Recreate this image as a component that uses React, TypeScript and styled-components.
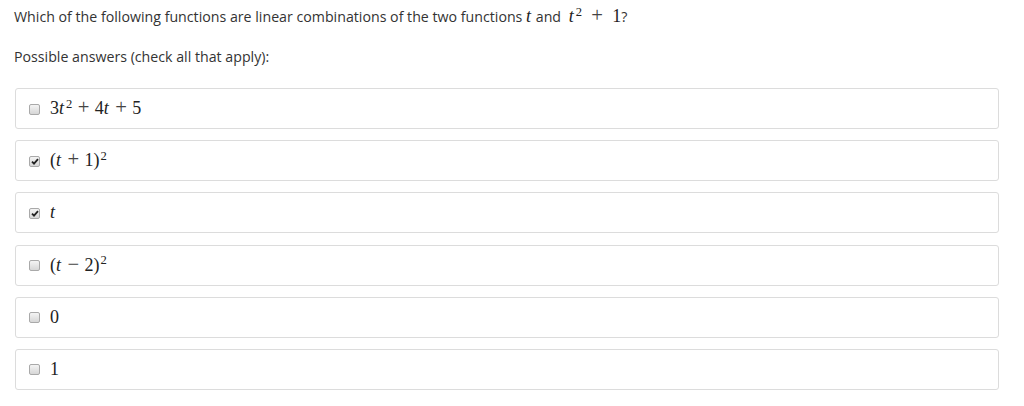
import React from 'react';
import styled, { createGlobalStyle } from 'styled-components';

const GlobalStyle = createGlobalStyle`
  html, body {
    margin: 0;
    padding: 0;
    background: #fff;
    overflow: hidden;
  }
  body {
    font-family: 'Open Sans', 'Liberation Sans', sans-serif;
    color: #333;
  }
`;

const Page = styled.div`
  padding: 6px 25px 0 15px;
  height: 406px;
  box-sizing: border-box;
  overflow: hidden;
`;

const Question = styled.p`
  margin: 0 0 0 -1px;
  font-size: 14.2px;
  line-height: 20px;
  height: 20px;
`;

const Hint = styled.p`
  margin: 21px 0 0 -1px;
  font-size: 14.2px;
  line-height: 20px;
`;

const Options = styled.ul`
  list-style: none;
  margin: 21px 0 0;
  padding: 0;
  display: flex;
  flex-direction: column;
  gap: 11.2px;
`;

const Option = styled.li`
  height: 41px;
  box-sizing: border-box;
  border: 1px solid #dcdcdc;
  border-radius: 3px;
  display: flex;
  align-items: center;
  padding-left: 13px;
  gap: 10px;
`;

const Box = styled.span`
  width: 11px;
  height: 11px;
  box-sizing: border-box;
  border: 1px solid #a9a9a9;
  border-radius: 2px;
  background: linear-gradient(#f4f4f4, #d6d6d6);
  display: flex;
  align-items: center;
  justify-content: center;
  flex: none;
  margin-top: 1px;
`;

const Math = styled.span<{ $size?: number; $gap?: number }>`
  font-family: 'Liberation Serif', 'DejaVu Serif', serif;
  font-size: ${(p) => p.$size ?? 18}px;
  margin-left: ${(p) => p.$gap ?? 0}px;
  color: #222;
  white-space: nowrap;
`;

const Mi = styled.i`
  font-style: italic;
  padding-right: 1px;
`;

const Mo = styled.span<{ $wide?: boolean }>`
  font-size: 1.15em;
  line-height: 0;
  margin: 0 ${(p) => (p.$wide ? 0.45 : 0.26)}em;
  color: #444;
`;

const Sup = styled.sup`
  font-size: 0.7em;
  vertical-align: 0.5em;
  line-height: 0;
  margin-left: 1px;
`;

const Feedback = styled.div`
  margin: 14px 0 0 15px;
  color: #c9302c;
  font-size: 14px;
  line-height: 20px;
`;

function Check({ checked }: { checked?: boolean }) {
  return (
    <Box>
      {checked && (
        <svg width="8" height="7" viewBox="0 0 8 7">
          <path d="M1 3.6 L3 5.6 L7 1.2" fill="none" stroke="#222" strokeWidth="1.8" />
        </svg>
      )}
    </Box>
  );
}

const options: { checked?: boolean; math: React.ReactNode }[] = [
  {
    math: (
      <>
        3<Mi>t</Mi>
        <Sup>2</Sup>
        <Mo>+</Mo>4<Mi>t</Mi>
        <Mo>+</Mo>5
      </>
    ),
  },
  {
    checked: true,
    math: (
      <>
        (<Mi>t</Mi>
        <Mo>+</Mo>1)<Sup>2</Sup>
      </>
    ),
  },
  { checked: true, math: <Mi>t</Mi> },
  {
    math: (
      <>
        (<Mi>t</Mi>
        <Mo>−</Mo>2)<Sup>2</Sup>
      </>
    ),
  },
  { math: <>0</> },
  { math: <>1</> },
];

export default function App() {
  return (
    <Page>
      <GlobalStyle />
      <Question>
        Which of the following functions are linear combinations of the two functions{' '}
        <Math $size={18}>
          <Mi>t</Mi>
        </Math>{' '}
        and{' '}
        <Math $size={18} $gap={4}>
          <Mi>t</Mi>
          <Sup>2</Sup>
          <Mo $wide>+</Mo>1
        </Math>
        ?
      </Question>
      <Hint>Possible answers (check all that apply):</Hint>
      <Options>
        {options.map((o, i) => (
          <Option key={i}>
            <Check checked={o.checked} />
            <Math>{o.math}</Math>
          </Option>
        ))}
      </Options>
      <Feedback>✗ Incorrect</Feedback>
    </Page>
  );
}
